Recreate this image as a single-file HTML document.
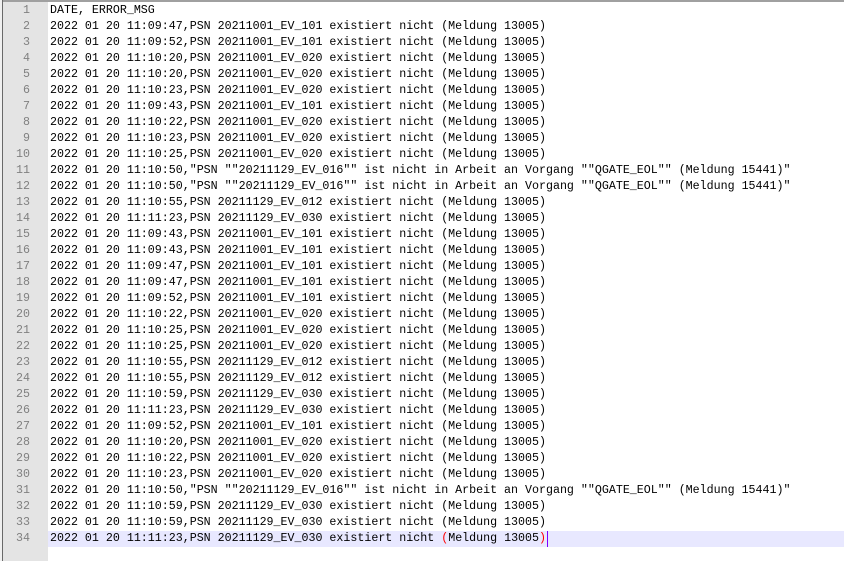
<!DOCTYPE html>
<html><head><meta charset="utf-8"><style>
html,body{margin:0;padding:0;width:844px;height:561px;overflow:hidden;background:#fff}
#top{position:absolute;left:0;top:0;width:844px;height:2px;background:#a0a0a0}
#lb{position:absolute;left:0;top:0;width:2px;height:561px;background:#f0f0f0}
#lb2{position:absolute;left:2px;top:0;width:1px;height:561px;background:#696969}
#gut{position:absolute;left:3px;top:2px;width:45px;height:559px;background:#e4e4e4}
#hl{position:absolute;left:48px;right:0;top:531px;height:16px;background:#e8e8ff}
#car{position:absolute;left:547px;top:531px;width:1px;height:16px;background:#8000ff}
#nums{position:absolute;left:3px;top:3px;width:27px;text-align:right;color:#808080;font-family:"Liberation Mono",monospace;font-size:11.65px;line-height:16px;white-space:pre}
#txt{position:absolute;left:50px;top:3px;color:#000;font-family:"Liberation Mono",monospace;font-size:11.65px;line-height:16px;white-space:pre}
.red{color:#f00}
</style></head><body>
<div id="top"></div><div id="lb"></div><div id="lb2"></div><div id="gut"></div><div id="hl"></div><div id="car"></div>
<div id="nums">1
2
3
4
5
6
7
8
9
10
11
12
13
14
15
16
17
18
19
20
21
22
23
24
25
26
27
28
29
30
31
32
33
34</div>
<div id="txt">DATE, ERROR_MSG
2022 01 20 11:09:47,PSN 20211001_EV_101 existiert nicht (Meldung 13005)
2022 01 20 11:09:52,PSN 20211001_EV_101 existiert nicht (Meldung 13005)
2022 01 20 11:10:20,PSN 20211001_EV_020 existiert nicht (Meldung 13005)
2022 01 20 11:10:20,PSN 20211001_EV_020 existiert nicht (Meldung 13005)
2022 01 20 11:10:23,PSN 20211001_EV_020 existiert nicht (Meldung 13005)
2022 01 20 11:09:43,PSN 20211001_EV_101 existiert nicht (Meldung 13005)
2022 01 20 11:10:22,PSN 20211001_EV_020 existiert nicht (Meldung 13005)
2022 01 20 11:10:23,PSN 20211001_EV_020 existiert nicht (Meldung 13005)
2022 01 20 11:10:25,PSN 20211001_EV_020 existiert nicht (Meldung 13005)
2022 01 20 11:10:50,"PSN ""20211129_EV_016"" ist nicht in Arbeit an Vorgang ""QGATE_EOL"" (Meldung 15441)"
2022 01 20 11:10:50,"PSN ""20211129_EV_016"" ist nicht in Arbeit an Vorgang ""QGATE_EOL"" (Meldung 15441)"
2022 01 20 11:10:55,PSN 20211129_EV_012 existiert nicht (Meldung 13005)
2022 01 20 11:11:23,PSN 20211129_EV_030 existiert nicht (Meldung 13005)
2022 01 20 11:09:43,PSN 20211001_EV_101 existiert nicht (Meldung 13005)
2022 01 20 11:09:43,PSN 20211001_EV_101 existiert nicht (Meldung 13005)
2022 01 20 11:09:47,PSN 20211001_EV_101 existiert nicht (Meldung 13005)
2022 01 20 11:09:47,PSN 20211001_EV_101 existiert nicht (Meldung 13005)
2022 01 20 11:09:52,PSN 20211001_EV_101 existiert nicht (Meldung 13005)
2022 01 20 11:10:22,PSN 20211001_EV_020 existiert nicht (Meldung 13005)
2022 01 20 11:10:25,PSN 20211001_EV_020 existiert nicht (Meldung 13005)
2022 01 20 11:10:25,PSN 20211001_EV_020 existiert nicht (Meldung 13005)
2022 01 20 11:10:55,PSN 20211129_EV_012 existiert nicht (Meldung 13005)
2022 01 20 11:10:55,PSN 20211129_EV_012 existiert nicht (Meldung 13005)
2022 01 20 11:10:59,PSN 20211129_EV_030 existiert nicht (Meldung 13005)
2022 01 20 11:11:23,PSN 20211129_EV_030 existiert nicht (Meldung 13005)
2022 01 20 11:09:52,PSN 20211001_EV_101 existiert nicht (Meldung 13005)
2022 01 20 11:10:20,PSN 20211001_EV_020 existiert nicht (Meldung 13005)
2022 01 20 11:10:22,PSN 20211001_EV_020 existiert nicht (Meldung 13005)
2022 01 20 11:10:23,PSN 20211001_EV_020 existiert nicht (Meldung 13005)
2022 01 20 11:10:50,"PSN ""20211129_EV_016"" ist nicht in Arbeit an Vorgang ""QGATE_EOL"" (Meldung 15441)"
2022 01 20 11:10:59,PSN 20211129_EV_030 existiert nicht (Meldung 13005)
2022 01 20 11:10:59,PSN 20211129_EV_030 existiert nicht (Meldung 13005)
2022 01 20 11:11:23,PSN 20211129_EV_030 existiert nicht <span class="red">(</span>Meldung 13005<span class="red">)</span></div>
</body></html>
